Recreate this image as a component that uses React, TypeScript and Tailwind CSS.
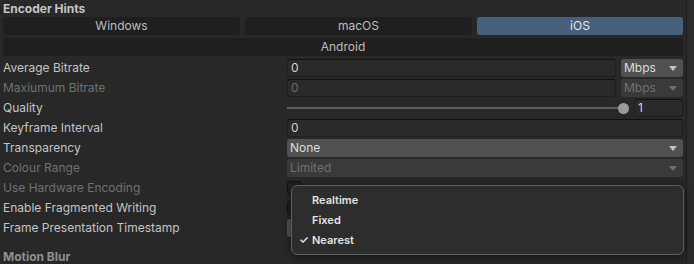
import React from 'react';

const font = { fontFamily: 'Inter, "Noto Sans", sans-serif' };

function Caret({ dim = false }: { dim?: boolean }) {
  return (
    <svg width="8" height="5" viewBox="0 0 8 5" className="shrink-0">
      <path d="M0 0h8L4 5z" fill={dim ? '#6f6f6f' : '#c4c4c4'} />
    </svg>
  );
}

function Row({ label, dim = false, children }: { label: string; dim?: boolean; children?: React.ReactNode }) {
  return (
    <div className="flex h-[20px] items-center">
      <div className={`w-[284px] shrink-0 text-[12px] leading-none ${dim ? 'text-[#707070]' : 'text-[#c4c4c4]'}`}>{label}</div>
      <div className="flex flex-1 items-center gap-[5px]">{children}</div>
    </div>
  );
}

function Field({ value, dim = false, className = 'flex-1' }: { value: string; dim?: boolean; className?: string }) {
  return (
    <div className={`${className} h-[18px] flex items-center rounded-[3px] border border-[#1f1f1f] border-t-[#111] bg-[#2a2a2a] pl-[3px] text-[12px] ${dim ? 'text-[#6a6a6a]' : 'text-[#d2d2d2]'}`}>
      {value}
    </div>
  );
}

function Dropdown({ value, dim = false, className = 'flex-1' }: { value: string; dim?: boolean; className?: string }) {
  return (
    <div className={`${className} h-[18px] flex items-center justify-between rounded-[3px] pl-[3px] pr-[6px] text-[12px] ${dim ? 'bg-[#3a3a3a] text-[#707070]' : 'bg-[#515151] text-[#dcdcdc]'}`}>
      <span>{value}</span>
      <Caret dim={dim} />
    </div>
  );
}

function Check() {
  return <div className="h-[14px] w-[14px] rounded-[3px] border border-[#111] bg-[#202020]" />;
}

export default function App() {
  return (
    <div className="flex h-[264px] w-[694px] overflow-hidden bg-[#282828]" style={font}>
      <div className="relative flex-1 px-[3px]">
        <div className="flex h-[17px] items-center text-[12px] font-bold text-[#c4c4c4]">Encoder Hints</div>

        <div className="flex flex-col gap-[3px]">
          <div className="flex gap-[5px]">
            <div className="flex h-[18px] w-[237px] items-center justify-center rounded-[3px] bg-[#1f1f1f] text-[12px] text-[#bdbdbd]">Windows</div>
            <div className="flex h-[18px] w-[227px] items-center justify-center rounded-[3px] bg-[#1f1f1f] text-[12px] text-[#bdbdbd]">macOS</div>
            <div className="flex h-[18px] flex-1 items-center justify-center rounded-[3px] bg-[#46607c] text-[12px] text-[#e6e6e6]">iOS</div>
          </div>
          <div className="flex h-[18px] items-center justify-center rounded-[3px] bg-[#1f1f1f] text-[12px] text-[#bdbdbd]">Android</div>
        </div>

        <div className="mt-[2px] flex flex-col">
          <Row label="Average Bitrate">
            <Field value="0" />
            <Dropdown value="Mbps" className="w-[62px]" />
          </Row>
          <Row label="Maxiumum Bitrate" dim>
            <Field value="0" dim />
            <Dropdown value="Mbps" dim className="w-[62px]" />
          </Row>
          <Row label="Quality">
            <div className="relative flex h-[18px] flex-1 items-center">
              <div className="h-[2px] flex-1 bg-[#5f5f5f]" />
              <div className="h-[11px] w-[11px] shrink-0 rounded-full bg-[#9b9b9b]" />
            </div>
            <Field value="1" className="w-[49px]" />
          </Row>
          <Row label="Keyframe Interval">
            <Field value="0" />
          </Row>
          <Row label="Transparency">
            <Dropdown value="None" />
          </Row>
          <Row label="Colour Range" dim>
            <Dropdown value="Limited" dim />
          </Row>
          <Row label="Use Hardware Encoding" dim>
            <Check />
          </Row>
          <Row label="Enable Fragmented Writing">
            <Check />
          </Row>
          <Row label="Frame Presentation Timestamp">
            <Dropdown value="" />
          </Row>
          <div className="mt-[9px] flex h-[20px] items-center text-[12px] font-bold text-[#8f8f8f]">Motion Blur</div>
        </div>

        <div className="absolute left-[291px] top-[185px] flex h-[70px] w-[393px] flex-col justify-center rounded-[6px] border border-[#5e5e5e] bg-[#2d2d2d] text-[11px] font-semibold text-[#e4e4e4] shadow-[0_2px_8px_rgba(0,0,0,0.5)]">
          <div className="flex h-[20px] items-center pl-[20px]">Realtime</div>
          <div className="flex h-[20px] items-center pl-[20px]">Fixed</div>
          <div className="flex h-[20px] items-center">
            <span className="w-[20px] pl-[7px] text-[11px]">✓</span>
            Nearest
          </div>
        </div>
      </div>
      <div className="w-[8px] shrink-0 border-l border-[#1e1e1e] bg-[#2b2b2b]" />
    </div>
  );
}
